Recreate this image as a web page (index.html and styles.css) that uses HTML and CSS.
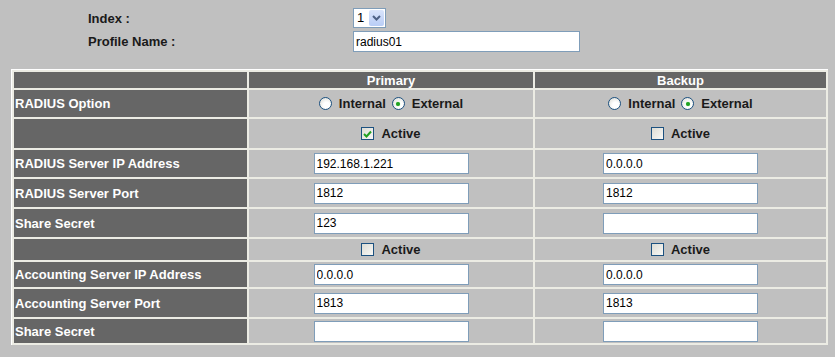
FILE: index.html
```html
<!DOCTYPE html>
<html>
<head>
<meta charset="utf-8">
<link rel="stylesheet" href="styles.css">
</head>
<body>
<div class="top">
  <div class="top-label">Index :</div>
  <div class="top-ctl">
    <div class="select"><span class="sel-val">1</span><span class="sel-btn"><svg width="9" height="6" viewBox="0 0 9 6"><path d="M1 1 L4.5 4.5 L8 1" fill="none" stroke="#4d6185" stroke-width="2"/></svg></span></div>
  </div>
  <div class="top-label">Profile Name :</div>
  <div class="top-ctl"><input class="txt wide" type="text" value="radius01"></div>
</div>

<table class="grid">
  <colgroup><col class="c1"><col class="c2"><col class="c3"></colgroup>
  <tr class="h-head">
    <th class="lbl"></th><th class="hd">Primary</th><th class="hd">Backup</th>
  </tr>
  <tr class="h-radius">
    <td class="lbl">RADIUS Option</td>
    <td class="val"><div class="row"><span class="opt"><span class="radio"></span>Internal</span><span class="opt"><span class="radio on"></span>External</span></div></td>
    <td class="val"><div class="row"><span class="opt"><span class="radio"></span>Internal</span><span class="opt"><span class="radio on"></span>External</span></div></td>
  </tr>
  <tr class="h-active">
    <td class="lbl"></td>
    <td class="val"><div class="row"><span class="opt"><span class="check"><svg width="9" height="8" viewBox="0 0 9 8"><path d="M1 4 L3.5 6.5 L8 1.5" fill="none" stroke="#21a121" stroke-width="2"/></svg></span>Active</span></div></td>
    <td class="val"><div class="row"><span class="opt"><span class="check"></span>Active</span></div></td>
  </tr>
  <tr class="h-ip">
    <td class="lbl">RADIUS Server IP Address</td>
    <td class="val"><input class="txt" type="text" value="192.168.1.221"></td>
    <td class="val"><input class="txt" type="text" value="0.0.0.0"></td>
  </tr>
  <tr class="h-port">
    <td class="lbl">RADIUS Server Port</td>
    <td class="val"><input class="txt" type="text" value="1812"></td>
    <td class="val"><input class="txt" type="text" value="1812"></td>
  </tr>
  <tr class="h-share">
    <td class="lbl">Share Secret</td>
    <td class="val"><input class="txt" type="text" value="123"></td>
    <td class="val"><input class="txt" type="text" value=""></td>
  </tr>
  <tr class="h-active2">
    <td class="lbl"></td>
    <td class="val"><div class="row"><span class="opt"><span class="check"></span>Active</span></div></td>
    <td class="val"><div class="row"><span class="opt"><span class="check"></span>Active</span></div></td>
  </tr>
  <tr class="h-accip">
    <td class="lbl">Accounting Server IP Address</td>
    <td class="val"><input class="txt" type="text" value="0.0.0.0"></td>
    <td class="val"><input class="txt" type="text" value="0.0.0.0"></td>
  </tr>
  <tr class="h-accport">
    <td class="lbl">Accounting Server Port</td>
    <td class="val"><input class="txt" type="text" value="1813"></td>
    <td class="val"><input class="txt" type="text" value="1813"></td>
  </tr>
  <tr class="h-share2">
    <td class="lbl">Share Secret</td>
    <td class="val"><input class="txt" type="text" value=""></td>
    <td class="val"><input class="txt" type="text" value=""></td>
  </tr>
</table>
</body>
</html>
```
FILE: styles.css
```css
html, body {
  margin: 0;
  padding: 0;
  background: #c0c0c0;
  font-family: "Liberation Sans", Arial, sans-serif;
  font-size: 13px;
  color: #111;
}

.top {
  display: grid;
  grid-template-columns: 265px auto;
  row-gap: 3px;
  padding: 8px 0 0 88px;
  align-items: center;
}
.top-label {
  font-weight: bold;
  font-size: 13px;
  color: #1a1a1a;
}
.top-ctl {
  display: flex;
}

.select {
  display: flex;
  align-items: stretch;
  width: 33px;
  height: 20px;
  box-sizing: border-box;
  border: 1px solid #7f9db9;
  background: #fff;
}
.sel-val {
  flex: 1;
  padding-left: 3px;
  font-size: 13px;
  line-height: 18px;
  color: #000;
}
.sel-btn {
  width: 15px;
  margin: 1px;
  background: linear-gradient(#d9e4fb, #b9cdf6);
  border-radius: 2px;
  display: flex;
  align-items: center;
  justify-content: center;
}

.txt {
  box-sizing: border-box;
  width: 155px;
  height: 21px;
  margin: 0;
  padding: 0 2px;
  border: 1px solid #7f9db9;
  background: #fff;
  font-family: "Liberation Sans", Arial, sans-serif;
  font-size: 12px;
  color: #000;
  outline: none;
  vertical-align: middle;
}
.txt.wide {
  width: 227px;
}

.grid {
  margin: 17px 0 0 11px;
  width: 816px;
  box-sizing: border-box;
  table-layout: fixed;
  border-collapse: separate;
  border-spacing: 2px;
  background: #ecece4;
  border-top: 1px solid #fff;
  border-left: 1px solid #fff;
}
.c1 { width: 233px; }
.c2 { width: 284px; }
.c3 { width: 291px; }

.grid th, .grid td {
  padding: 0;
  font-size: 13px;
}
.lbl {
  background: #666666;
  color: #fff;
  font-weight: bold;
  text-align: left;
  padding-left: 1px !important;
  white-space: nowrap;
}
.hd {
  background: #666666;
  color: #fff;
  font-weight: bold;
  text-align: center;
}
.val {
  background: #c0c0c0;
  text-align: center;
  vertical-align: middle;
}

.h-head td, .h-head th { height: 16px; }
.h-radius td { height: 27px; }
.h-active td { height: 29px; }
.h-ip td { height: 27px; }
.h-port td { height: 28px; }
.h-share td { height: 28px; }
.h-active2 td { height: 21px; }
.h-accip td { height: 25px; }
.h-accport td { height: 28px; }
.h-share2 td { height: 24px; }

.row {
  display: flex;
  justify-content: center;
  align-items: center;
  gap: 6px;
}
.opt {
  display: flex;
  align-items: center;
  font-weight: bold;
  color: #1a1a1a;
}
.radio {
  box-sizing: border-box;
  width: 13px;
  height: 13px;
  border: 1px solid #1c5180;
  border-radius: 50%;
  background: radial-gradient(circle at 60% 65%, #fff 30%, #d8d8d0 100%);
  margin-right: 7px;
  display: flex;
  align-items: center;
  justify-content: center;
}
.radio.on::after {
  content: "";
  width: 4px;
  height: 4px;
  border-radius: 50%;
  background: #21a121;
  box-shadow: 0 0 1px #5fd35f;
}
.check {
  box-sizing: border-box;
  width: 13px;
  height: 13px;
  border: 1px solid #1c5180;
  background: linear-gradient(135deg, #dcdcd4, #f8f8f6);
  margin-right: 7px;
  display: flex;
  align-items: center;
  justify-content: center;
}
```
